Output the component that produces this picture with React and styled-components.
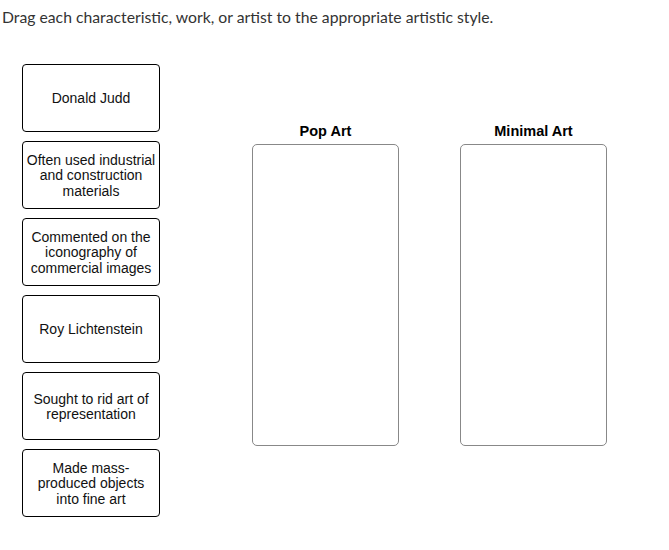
import React from "react";
import styled, { createGlobalStyle } from "styled-components";

const GlobalStyle = createGlobalStyle`
  body {
    margin: 0;
    background: #fff;
  }
`;

const Page = styled.div`
  width: 669px;
  height: 550px;
  position: relative;
  font-family: "Liberation Sans", Arial, sans-serif;
`;

const Prompt = styled.p`
  margin: 0;
  padding: 7px 0 0 2px;
  font-family: Lato, "Open Sans", sans-serif;
  font-size: 15.75px;
  line-height: 20px;
  color: #333;
`;

const Board = styled.div`
  display: flex;
  align-items: flex-start;
  padding: 37px 0 0 22px;
`;

const Bank = styled.div`
  display: flex;
  flex-direction: column;
  gap: 9px;
  width: 138px;
`;

const Card = styled.div`
  box-sizing: border-box;
  height: 68px;
  border: 1px solid #000;
  border-radius: 4px;
  display: flex;
  align-items: center;
  justify-content: center;
  text-align: center;
  padding: 2px 2px 0;
  font-size: 14px;
  line-height: 15.5px;
  color: #111;
`;

const Targets = styled.div`
  display: flex;
  gap: 61px;
  margin-left: 92px;
  margin-top: 59px;
`;

const Column = styled.div`
  display: flex;
  flex-direction: column;
  align-items: center;
  width: 147px;
`;

const Heading = styled.div`
  font-weight: bold;
  font-size: 14.5px;
  line-height: 17px;
  color: #000;
  margin-bottom: 4px;
`;

const Drop = styled.div`
  box-sizing: border-box;
  width: 147px;
  height: 302px;
  border: 1px solid #888;
  border-radius: 5px;
`;

const items = [
  "Donald Judd",
  "Often used industrial and construction materials",
  "Commented on the iconography of commercial images",
  "Roy Lichtenstein",
  "Sought to rid art of representation",
  "Made mass-produced objects into fine art",
];

export default function App() {
  return (
    <>
      <GlobalStyle />
      <Page>
        <Prompt>
          Drag each characteristic, work, or artist to the appropriate artistic style.
        </Prompt>
        <Board>
          <Bank>
            {items.map((t) => (
              <Card key={t}>{t}</Card>
            ))}
          </Bank>
          <Targets>
            <Column>
              <Heading>Pop Art</Heading>
              <Drop />
            </Column>
            <Column>
              <Heading>Minimal Art</Heading>
              <Drop />
            </Column>
          </Targets>
        </Board>
      </Page>
    </>
  );
}
